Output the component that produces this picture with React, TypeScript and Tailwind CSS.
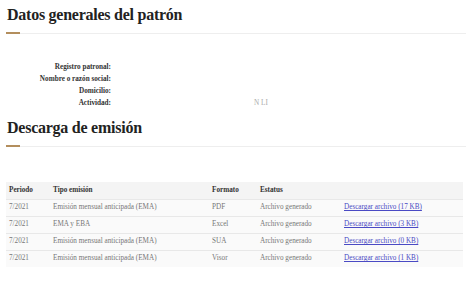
import React from "react";

function SectionTitle({ children }: { children: React.ReactNode }) {
  return (
    <div>
      <h2 className="font-['Liberation_Serif','Times_New_Roman',serif] text-[16px] leading-[20px] tracking-[-0.25px] font-bold text-[#222] pl-[7px]">{children}</h2>
      <div className="mt-[7px] flex items-center">
        <div className="ml-[6px] w-[14px] h-[2px] bg-[#b38e5d]" />
        <div className="flex-1 h-px bg-[#eeeeee] mr-[8px]" />
      </div>
    </div>
  );
}

const rows = [
  { p: "7/2021", t: "Emisión mensual anticipada (EMA)", f: "PDF", s: "Archivo generado", l: "Descargar archivo (17 KB)" },
  { p: "7/2021", t: "EMA y EBA", f: "Excel", s: "Archivo generado", l: "Descargar archivo (3 KB)" },
  { p: "7/2021", t: "Emisión mensual anticipada (EMA)", f: "SUA", s: "Archivo generado", l: "Descargar archivo (0 KB)" },
  { p: "7/2021", t: "Emisión mensual anticipada (EMA)", f: "Visor", s: "Archivo generado", l: "Descargar archivo (1 KB)" },
];

export default function App() {
  return (
    <div className="w-[474px] h-[285px] bg-white overflow-hidden font-['Liberation_Serif','Times_New_Roman',serif]">
      <div className="pt-[5px]">
        <SectionTitle>Datos generales del patrón</SectionTitle>
      </div>

      <div className="mt-[27px] grid grid-cols-[111px_1fr] text-[7.2px] leading-[12px]">
        {["Registro patronal:", "Nombre o razón social:", "Domicilio:", "Actividad:"].map((l, i) => (
          <React.Fragment key={l}>
            <div className="text-right font-bold text-[#333]">{l}</div>
            <div className="text-[#aaaaaa] pl-[143px]">{i === 3 ? "N LI" : ""}</div>
          </React.Fragment>
        ))}
      </div>

      <div className="mt-[9px]">
        <SectionTitle>Descarga de emisión</SectionTitle>
      </div>

      <div className="mt-[35px] px-[6px] pr-[11px]">
        <table className="w-full border-collapse text-[7.2px] table-fixed">
          <colgroup>
            <col className="w-[44px]" />
            <col className="w-[159px]" />
            <col className="w-[48px]" />
            <col className="w-[84px]" />
            <col />
          </colgroup>
          <thead>
            <tr className="bg-[#f4f4f4] h-[17px]">
              {["Periodo", "Tipo emisión", "Formato", "Estatus", ""].map((h, i) => (
                <th key={i} className="text-left font-bold text-[#333] pl-[3px] align-middle">{h}</th>
              ))}
            </tr>
          </thead>
          <tbody>
            {rows.map((r, i) => (
              <tr key={i} className="h-[17px] bg-[#fafafa] border-t border-[#e8e8e8]">
                <td className="pl-[3px] text-[#777]">{r.p}</td>
                <td className="pl-[3px] text-[#777]">{r.t}</td>
                <td className="pl-[3px] text-[#777]">{r.f}</td>
                <td className="pl-[3px] text-[#777]">{r.s}</td>
                <td className="pl-[3px]">
                  <a className="text-[#4a4ac4] underline">{r.l}</a>
                </td>
              </tr>
            ))}
          </tbody>
        </table>
      </div>
    </div>
  );
}
